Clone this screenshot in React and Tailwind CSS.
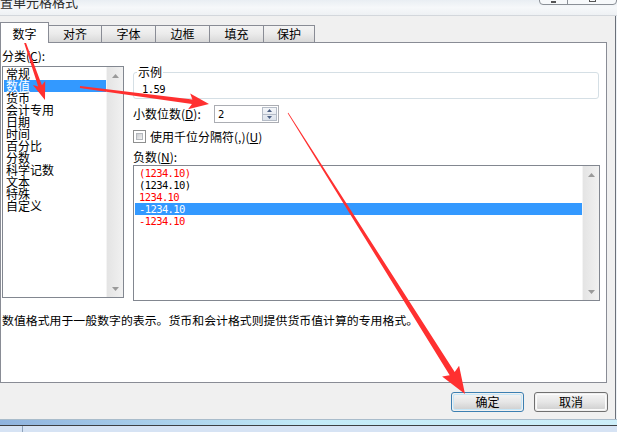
import React from 'react';

const CATEGORIES = ['常规', '数值', '货币', '会计专用', '日期', '时间', '百分比', '分数', '科学记数', '文本', '特殊', '自定义'];

const NEGATIVES = [
  { text: '(1234.10)', color: 'text-[#ff0000]' },
  { text: '(1234.10)', color: 'text-black' },
  { text: '1234.10', color: 'text-[#ff0000]' },
  { text: '-1234.10', color: 'text-white', selected: true },
  { text: '-1234.10', color: 'text-[#ff0000]' },
];

const TABS = [
  { label: '对齐', w: 'w-[53px]' },
  { label: '字体', w: 'w-[54px]' },
  { label: '边框', w: 'w-[54px]' },
  { label: '填充', w: 'w-[54px]' },
  { label: '保护', w: 'w-[51px]' },
];

// tapered arrow polygon: thin tail, wider neck, swept head
function arrowPoints(tx, ty, px, py, tail, neck, headW, headL) {
  const len = Math.hypot(px - tx, py - ty);
  const ux = (px - tx) / len;
  const uy = (py - ty) / len;
  const nx = -uy;
  const ny = ux;
  const cx = px - ux * headL;
  const cy = py - uy * headL;
  const bx = cx - ux * 3;
  const by = cy - uy * 3;
  const pts = [
    [tx + nx * tail / 2, ty + ny * tail / 2],
    [cx + nx * neck / 2, cy + ny * neck / 2],
    [bx + nx * headW / 2, by + ny * headW / 2],
    [px, py],
    [bx - nx * headW / 2, by - ny * headW / 2],
    [cx - nx * neck / 2, cy - ny * neck / 2],
    [tx - nx * tail / 2, ty - ny * tail / 2],
  ];
  return pts.map((p) => p.map((v) => v.toFixed(1)).join(',')).join(' ');
}

function Scrollbar() {
  return (
    <div className="w-[17px] h-full flex flex-col justify-between bg-gradient-to-r from-[#e4e4e4] to-[#f1f1f1] border-l border-[#f4f4f4]">
      <div className="h-[17px] flex items-center justify-center">
        <svg width="7" height="4" viewBox="0 0 7 4">
          <path d="M0 4 L3.5 0 L7 4 Z" fill="#9a9a9a" />
        </svg>
      </div>
      <div className="h-[17px] flex items-center justify-center">
        <svg width="7" height="4" viewBox="0 0 7 4">
          <path d="M0 0 L3.5 4 L7 0 Z" fill="#9a9a9a" />
        </svg>
      </div>
    </div>
  );
}

function Mnemonic({ k }) {
  return (
    <span>
      (<span className="underline">{k}</span>)
    </span>
  );
}

export default function App() {
  return (
    <div className="relative w-[617px] h-[432px] overflow-hidden bg-[#f0f0f0] font-['Noto_Sans_CJK_SC',sans-serif] text-[12px] leading-[12px] text-black">
      {/* Title bar (glass) */}
      <div className="h-[15px] flex items-start justify-between bg-gradient-to-b from-[#e9eef3] via-[#f6f8fa] to-[#eef1f4] overflow-hidden">
        <span className="-mt-[5px] text-[13px] leading-[13px] text-[#2a2a2a]">置单元格格式</span>
        <div className="flex h-[6px] -mt-px border border-[#8b9097] rounded-b-[4px] bg-[#f7f9fb]">
          <div className="w-[28px] border-r border-[#8b9097] flex justify-center">
            <div className="w-[5px] h-[2px] bg-[#555] mt-[1px]" />
          </div>
          <div className="w-[48px] flex justify-center">
            <div className="w-[7px] h-[2px] border border-[#555] border-t-0" />
          </div>
        </div>
      </div>

      <div className="flex h-[404px] border-t border-[#d3d7dc]">
        <div className="w-[615px] flex flex-col">
          {/* Tabs */}
          <div className="mt-[6px] h-[20px] flex items-end">
            <div className="relative z-10 -mb-px w-[49px] h-[21px] flex items-center justify-center pt-[1px] bg-white border border-b-0 border-[#898c95]">
              数字
            </div>
            {TABS.map((t) => (
              <div
                key={t.label}
                className={`${t.w} h-[17px] flex items-center justify-center border-t border-r border-[#898c95] bg-gradient-to-b from-[#f4f4f4] via-[#ebebeb] to-[#d8d8d8]`}
              >
                {t.label}
              </div>
            ))}
          </div>

          {/* Tab panel */}
          <div className="w-[607px] h-[341px] bg-white border border-[#898c95] flex flex-col">
            <div className="flex">
              {/* Category column */}
              <div className="ml-px w-[122px] flex flex-col">
                <div className="mt-[7px]">
                  分类<Mnemonic k="C" />:
                </div>
                <div className="mt-[4px] h-[232px] border border-[#828790] flex">
                  <div className="flex-1 pt-px pl-px">
                    {CATEGORIES.map((c) => (
                      <div
                        key={c}
                        className={`h-[12px] pl-[2px] whitespace-nowrap ${c === '数值' ? 'bg-[#3399ff] text-white' : ''}`}
                      >
                        {c}
                      </div>
                    ))}
                  </div>
                  <Scrollbar />
                </div>
              </div>

              {/* Options column */}
              <div className="ml-[9px] w-[467px] flex flex-col">
                <div className="relative mt-[29px] h-[27px] w-[466px] border border-[#d5dfe5] rounded-[3px]">
                  <span className="absolute left-[3px] -top-[7px] bg-white px-px">示例</span>
                  <div className="pt-[10px] pl-[8px] font-['DejaVu_Sans_Mono',monospace] text-[10.5px] leading-[12px] tracking-[-0.6px]">
                    1.59
                  </div>
                </div>

                <div className="mt-[6px] h-[18px] flex items-center">
                  <div className="w-[81px] whitespace-nowrap">
                    小数位数<Mnemonic k="D" />:
                  </div>
                  <div className="w-[65px] h-[18px] flex border border-[#abadb3] bg-white">
                    <div className="flex-1 pl-[3px] flex items-center font-['DejaVu_Sans_Mono',monospace] text-[10.5px]">2</div>
                    <div className="w-[15px] mr-px my-px flex flex-col border border-[#b5bcc7] bg-gradient-to-b from-[#f4f6f9] to-[#dde3ec]">
                      <div className="flex-1 flex items-center justify-center border-b border-[#b5bcc7]">
                        <svg width="5" height="3" viewBox="0 0 5 3">
                          <path d="M0 3 L2.5 0 L5 3 Z" fill="#4d6185" />
                        </svg>
                      </div>
                      <div className="flex-1 flex items-center justify-center">
                        <svg width="5" height="3" viewBox="0 0 5 3">
                          <path d="M0 0 L2.5 3 L5 0 Z" fill="#4d6185" />
                        </svg>
                      </div>
                    </div>
                  </div>
                </div>

                <div className="mt-[7px] h-[13px] flex items-center">
                  <div className="w-[13px] h-[13px] border border-[#8e8f8f] bg-white p-[2px]">
                    <div className="w-full h-full bg-gradient-to-br from-[#c9cbcf] to-[#f3f3f3] border border-[#b4b8bd]" />
                  </div>
                  <span className="ml-[4px] whitespace-nowrap">
                    使用千位分隔符(,)<Mnemonic k="U" />
                  </span>
                </div>

                <div className="mt-[8px]">
                  负数<Mnemonic k="N" />:
                </div>

                <div className="mt-[2px] h-[136px] border border-[#828790] flex">
                  <div className="flex-1 pt-px pl-px font-['DejaVu_Sans_Mono',monospace] text-[10.5px] leading-[12px] tracking-[-0.6px]">
                    {NEGATIVES.map((n, i) => (
                      <div key={i} className={`h-[12px] pl-[4px] ${n.color} ${n.selected ? 'bg-[#3399ff]' : ''}`}>
                        {n.text}
                      </div>
                    ))}
                  </div>
                  <Scrollbar />
                </div>
              </div>
            </div>

            <div className="mt-[13px] ml-px text-[11.9px] leading-[12px] whitespace-nowrap">
              数值格式用于一般数字的表示。货币和会计格式则提供货币值计算的专用格式。
            </div>
          </div>

          {/* Dialog buttons */}
          <div className="mt-[9px] h-[20px] flex justify-end gap-[10px] pr-[7px]">
            <div className="w-[73px] h-[20px] rounded-[3px] border border-[#3c7fb1] p-px">
              <div className="w-full h-full rounded-[2px] border border-[#c6e7f8] bg-gradient-to-b from-[#f2f2f2] via-[#e6e6e6] to-[#d2d2d2] flex items-center justify-center">
                确定
              </div>
            </div>
            <div className="w-[74px] h-[20px] rounded-[3px] border border-[#707070] p-px">
              <div className="w-full h-full rounded-[2px] border border-[#fbfbfb] bg-gradient-to-b from-[#f2f2f2] via-[#e6e6e6] to-[#d2d2d2] flex items-center justify-center">
                取消
              </div>
            </div>
          </div>
        </div>
        <div className="w-px bg-[#6b7079]" />
        <div className="flex-1 bg-[#eef2f6]" />
      </div>

      {/* Lower window edge */}
      <div className="h-[6px] border-t border-[#a9bccb] bg-gradient-to-r from-[#8fb3de] via-[#c3ebf8] to-[#cdeef9]" />
      <div className="h-px bg-[#3d3f42]" />
      <div className="h-[6px] flex bg-[#d6e3f4]">
        <div className="w-[23px] border-r border-[#8ea3bb]" />
      </div>

      {/* Red annotation arrows */}
      <svg className="absolute inset-0 pointer-events-none" width="617" height="432">
        <polygon points={arrowPoints(23, 37, 45, 100, 1.5, 4, 13, 15)} fill="#ff3030" />
        <polygon points={arrowPoints(80, 87, 209, 104, 2, 4.5, 16, 17)} fill="#ff3030" />
        <polygon points={arrowPoints(288, 113, 465, 394, 0.8, 6, 20, 24)} fill="#ff3030" />
      </svg>
    </div>
  );
}
